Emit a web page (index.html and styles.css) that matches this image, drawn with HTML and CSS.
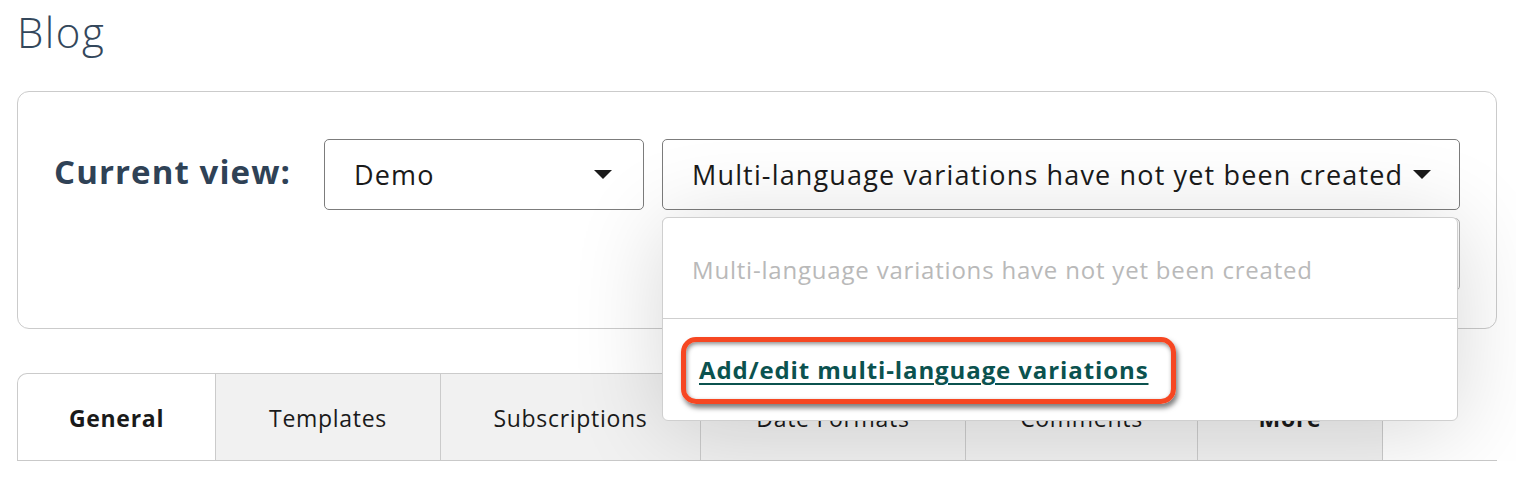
FILE: index.html
```html
<!DOCTYPE html>
<html lang="en">
<head>
    <meta charset="UTF-8">
    <title>Blog</title>
    <link rel="stylesheet" href="styles.css">
</head>
<body>
    <div class="page">
        <h1 class="page-title">Blog</h1>

        <div class="view-card">
            <span class="view-label">Current view:</span>
            <div class="select select-blog">
                <span>Demo</span>
                <span class="caret"></span>
            </div>
            <div class="lang-col">
                <div class="select select-lang">
                    <span>Multi-language variations have not yet been created</span>
                    <span class="caret"></span>
                </div>
                <div class="select select-ghost"></div>

                <div class="dropdown">
                    <div class="dropdown-empty">Multi-language variations have not yet been created</div>
                    <div class="dropdown-footer">
                        <span class="highlight">
                            <a href="#" class="dropdown-link">Add/edit multi-language variations</a>
                        </span>
                    </div>
                </div>
            </div>
        </div>

        <div class="tabs">
            <div class="tab active">General</div>
            <div class="tab">Templates</div>
            <div class="tab">Subscriptions</div>
            <div class="tab">Date Formats</div>
            <div class="tab">Comments</div>
            <div class="tab tab-more">More</div>
        </div>
    </div>
</body>
</html>
```

FILE: styles.css
```css
body {
    margin: 0;
    background-color: #fff;
    font-family: "Open Sans", Arial, sans-serif;
    color: #33475b;
}
.page {
    padding: 0 19px 0 17px;
}
.page-title {
    margin: 0;
    padding-top: 8px;
    font-size: 42px;
    font-weight: 300;
    line-height: 48px;
    letter-spacing: 1.5px;
    color: #33475b;
}

/* current view card */
.view-card {
    display: flex;
    align-items: flex-start;
    margin-top: 35px;
    padding: 47px 36px 37px 36px;
    border: 1px solid #cbcbcb;
    border-radius: 12px;
    background-color: #fff;
}
.view-label {
    width: 271px;
    margin-top: 13px;
    font-size: 33px;
    font-weight: 700;
    line-height: 40px;
    letter-spacing: 1.1px;
    color: #2f4256;
}
.select {
    display: flex;
    align-items: center;
    justify-content: space-between;
    box-sizing: border-box;
    height: 71px;
    padding: 0 29px;
    border: 1px solid #7c7c7c;
    border-radius: 5px;
    background-color: #fff;
    font-size: 27px;
    letter-spacing: 1.15px;
    color: #1a1a1a;
}
.select-blog {
    width: 321px;
    padding-right: 31px;
}
.lang-col {
    position: relative;
    margin-left: 18px;
}
.select-lang {
    width: 798px;
    padding-right: 28px;
}
.select-ghost {
    width: 798px;
    height: 73px;
    margin-top: 8px;
    border-color: #b5b5b5;
}
.caret {
    width: 0;
    height: 0;
    border-left: 9px solid transparent;
    border-right: 9px solid transparent;
    border-top: 9px solid #1a1a1a;
}

/* open dropdown menu */
.dropdown {
    position: absolute;
    top: 78px;
    left: 0;
    z-index: 2;
    width: 796px;
    height: 204px;
    box-sizing: border-box;
    border: 1px solid #cfcfcf;
    border-radius: 6px;
    background-color: #fff;
    box-shadow: 0 8px 90px rgba(0, 0, 0, 0.16);
}
.dropdown-empty {
    height: 101px;
    box-sizing: border-box;
    padding: 35px 29px 0 29px;
    border-bottom: 1px solid #cfcfcf;
    font-size: 24px;
    letter-spacing: 0.8px;
    color: #b9b9b9;
}
.dropdown-footer {
    padding: 18px 0 0 18px;
}
.highlight {
    display: inline-block;
    padding: 11px 22px 12px 13px;
    border: 5px solid #f64722;
    border-radius: 15px;
    box-shadow: 2px 4px 5px rgba(0, 0, 0, 0.5), inset 1px 2px 4px rgba(0, 0, 0, 0.45);
}
.dropdown-link {
    font-size: 24px;
    font-weight: 700;
    line-height: 34px;
    letter-spacing: 0.9px;
    color: #0b524f;
    text-decoration: underline;
    text-decoration-thickness: 2px;
    text-underline-offset: 4px;
}

/* tabs */
.tabs {
    display: flex;
    margin-top: 44px;
    border-bottom: 1px solid #c9c9c9;
}
.tab {
    box-sizing: border-box;
    height: 87px;
    padding-top: 28px;
    border-top: 1px solid #cbcbcb;
    border-left: 1px solid #cbcbcb;
    background-color: #f1f1f1;
    font-size: 23px;
    letter-spacing: 0.7px;
    text-align: center;
    color: #1a1a1a;
}
.tab:nth-child(1) { width: 198px; }
.tab:nth-child(2) { width: 225px; }
.tab:nth-child(3) { width: 260px; }
.tab:nth-child(4) { width: 265px; }
.tab:nth-child(5) { width: 232px; }
.tab:nth-child(6) { width: 186px; border-right: 1px solid #cbcbcb; }
.tab.active {
    background-color: #fff;
    border-top-left-radius: 10px;
    font-weight: 700;
}
.tab-more {
    font-weight: 700;
}
```
